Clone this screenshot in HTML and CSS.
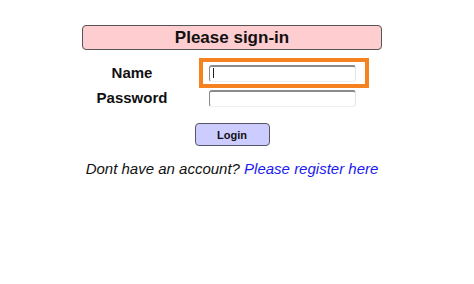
FILE: index.html
```html
<!DOCTYPE html>
<html>
<head>
<meta charset="utf-8">
<title>Sign in</title>
<link rel="stylesheet" href="styles.css">
</head>
<body>
<div class="panel">
  <div class="title">Please sign-in</div>
  <form class="form">
    <label class="label" for="name">Name</label>
    <span class="focus-ring"><input class="field" id="name" type="text"><span class="caret"></span></span>
    <label class="label" for="pw">Password</label>
    <span class="plain"><input class="field" id="pw" type="password"></span>
  </form>
  <div class="actions"><button class="login" type="button">Login</button></div>
  <p class="register">Dont have an account? <a href="#" class="link">Please register here</a></p>
</div>
</body>
</html>
```

FILE: styles.css
```css
html, body {
  margin: 0;
  padding: 0;
  background: #ffffff;
}
body {
  font-family: "Liberation Sans", Arial, sans-serif;
  color: #111111;
}
.panel {
  width: 300px;
  margin-left: 82px;
  padding-top: 25px;
}
.title {
  box-sizing: border-box;
  height: 25px;
  border: 1px solid #555555;
  border-radius: 4px;
  background: #fecdd0;
  font-weight: bold;
  font-size: 17px;
  line-height: 23px;
  text-align: center;
  color: #111111;
}
.form {
  display: grid;
  grid-template-columns: 100px auto;
  align-items: center;
  justify-items: start;
  margin: 8px 0 0 0;
}
.label {
  justify-self: center;
  font-weight: bold;
  font-size: 15px;
  line-height: 18px;
  color: #111111;
}
.focus-ring {
  position: relative;
  display: flex;
  margin-left: 17px;
  padding: 3px 9px 2px 6px;
  border: 4px solid #f5821f;
}
.plain {
  display: flex;
  margin-left: 27px;
  margin-top: 2px;
}
.field {
  box-sizing: border-box;
  width: 147px;
  height: 17px;
  margin: 0;
  padding: 0 3px;
  border-style: solid;
  border-width: 2px 1px 1px 1.5px;
  border-color: #8a8a8a #e4e4e4 #efefef #8a8a8a;
  border-radius: 3px;
  background: #ffffff;
  outline: none;
  font-family: "Liberation Sans", Arial, sans-serif;
  font-size: 12px;
}
.caret {
  position: absolute;
  left: 10px;
  top: 6px;
  width: 1px;
  height: 10px;
  background: #222222;
}
.actions {
  display: flex;
  justify-content: center;
  margin-top: 16px;
}
.login {
  box-sizing: border-box;
  width: 75px;
  height: 23px;
  margin: 0;
  padding: 0;
  border: 1.5px solid #555566;
  border-radius: 4px;
  background: #ccccff;
  font-family: "Liberation Sans", Arial, sans-serif;
  font-weight: bold;
  font-size: 11px;
  color: #111111;
}
.register {
  margin: 14px 0 0 0;
  font-style: italic;
  font-size: 15px;
  line-height: 18px;
  text-align: center;
  color: #111111;
  white-space: nowrap;
}
.link {
  color: #1a1af0;
  text-decoration: none;
}
```
